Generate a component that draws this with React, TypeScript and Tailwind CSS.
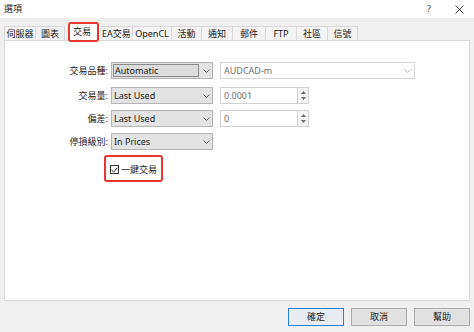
import React from 'react'

const font = { fontFamily: '"Noto Sans", "Noto Sans CJK TC", sans-serif' }

const tabs: { label: string; w: string; active?: boolean }[] = [
  { label: '伺服器', w: 'w-[32px]' },
  { label: '圖表', w: 'w-[29px]' },
  { label: '交易', w: 'w-[36px]', active: true },
  { label: 'EA交易', w: 'w-[32px]' },
  { label: 'OpenCL', w: 'w-[39px]' },
  { label: '活動', w: 'w-[30px]' },
  { label: '通知', w: 'w-[31px]' },
  { label: '郵件', w: 'w-[33px]' },
  { label: 'FTP', w: 'w-[31px]' },
  { label: '社區', w: 'w-[31px]' },
  { label: '信號', w: 'w-[30px]' },
]

function Chevron({ color = '#6b6b6b' }: { color?: string }) {
  return (
    <svg width="7" height="4" viewBox="0 0 7 4">
      <path d="M0.5 0.5 L3.5 3.5 L6.5 0.5" fill="none" stroke={color} strokeWidth="1" />
    </svg>
  )
}

function Select({ value, focused }: { value: string; focused?: boolean }) {
  return (
    <div className="ml-[2px] w-[102px] h-[17px] flex items-stretch bg-[#e3e3e3] border border-[#b4b4b4]">
      {focused ? (
        <div className="flex-1 flex items-center pl-[1px] m-[1px] border border-[#8c8c8c] bg-[#dcdcdc]">{value}</div>
      ) : (
        <div className="flex-1 flex items-center pl-[2px]">{value}</div>
      )}
      <div className="w-[12px] flex items-center justify-center">
        <Chevron />
      </div>
    </div>
  )
}

function Spin({ value }: { value: string }) {
  return (
    <div className="ml-[7px] flex h-[17px]">
      <div className="w-[78px] flex items-center pl-[3px] bg-white border border-[#d0d0d0] text-[#6f6f6f]">{value}</div>
      <div className="w-[11px] flex flex-col items-center justify-center gap-[3px] border border-l-0 border-[#d0d0d0] bg-[#f4f4f4]">
        <svg width="5" height="3" viewBox="0 0 5 3"><path d="M0 3 L2.5 0 L5 3 Z" fill="#6b6b6b" /></svg>
        <svg width="5" height="3" viewBox="0 0 5 3"><path d="M0 0 L2.5 3 L5 0 Z" fill="#6b6b6b" /></svg>
      </div>
    </div>
  )
}

function Row({ label, children, className = '' }: { label: string; children: React.ReactNode; className?: string }) {
  return (
    <div className={`flex items-center ${className}`}>
      <div className="w-[104px] text-right pr-[1px]">{label}</div>
      {children}
    </div>
  )
}

export default function App() {
  return (
    <div style={font} className="w-[474px] h-[332px] bg-[#f0f0f0] flex flex-col text-[9px] text-[#1a1a1a] overflow-hidden">
      {/* title bar */}
      <div className="h-[18px] bg-white flex items-center justify-between pl-[4px] pr-[10px]">
        <span>選項</span>
        <div className="flex items-center gap-[24px] text-[#444]">
          <span className="text-[9px]">?</span>
          <svg width="9" height="9" viewBox="0 0 9 9">
            <path d="M0.5 0.5 L8.5 8.5 M8.5 0.5 L0.5 8.5" stroke="#333" strokeWidth="0.9" />
          </svg>
        </div>
      </div>

      {/* tabs */}
      <div className="mt-[4px] -mb-[2px] h-[20px] pl-[4px] flex items-end relative z-10">
        {tabs.map((t, i) =>
          t.active ? (
            <div key={t.label} className={`${t.w} h-[20px] flex justify-start pl-[3px]`}>
              <div className="w-[31px] h-[20px] border-2 border-[#e8352d] rounded-[3px] bg-white flex items-center pl-[3px]">
                {t.label}
              </div>
            </div>
          ) : (
            <div
              key={t.label}
              className={`${t.w} h-[14px] mb-[2px] flex items-center justify-center bg-[#f3f3f3] border-t border-r border-[#d9d9d9] ${i === 0 ? 'border-l' : ''}`}
            >
              {t.label}
            </div>
          )
        )}
      </div>

      {/* panel */}
      <div className="mx-[4px] h-[261px] bg-white border border-[#d9d9d9] pt-[21px]">
        <Row label="交易品種:">
          <Select value="Automatic" focused />
          <div className="ml-[7px] w-[195px] h-[17px] flex items-center justify-between pl-[3px] pr-[3px] bg-white border border-[#d6d6d6] text-[#6f6f6f]">
            <span>AUDCAD-m</span>
            <Chevron color="#b0b0b0" />
          </div>
        </Row>
        <Row label="交易量:" className="mt-[8px]">
          <Select value="Last Used" />
          <Spin value="0.0001" />
        </Row>
        <Row label="偏差:" className="mt-[6px]">
          <Select value="Last Used" />
          <Spin value="0" />
        </Row>
        <Row label="停損級別:" className="mt-[6px]">
          <Select value="In Prices" />
        </Row>
        <div className="ml-[99px] mt-[5px] w-[59px] h-[27px] border-2 border-[#e8352d] rounded-[3px] flex items-center pt-[2px] pl-[4px]">
          <div className="w-[9px] h-[9px] border border-[#333] bg-white flex items-center justify-center">
            <svg width="7" height="6" viewBox="0 0 7 6">
              <path d="M0.5 3 L2.6 5 L6.5 0.6" fill="none" stroke="#222" strokeWidth="1" />
            </svg>
          </div>
          <span className="ml-[2px]">一鍵交易</span>
        </div>
      </div>

      {/* footer */}
      <div className="flex justify-end gap-[7px] pr-[4px] pt-[7px]">
        <button className="w-[56px] h-[18px] bg-[#e9edf1] border border-[#2b7fd3]">確定</button>
        <button className="w-[56px] h-[18px] bg-[#e1e1e1] border border-[#adadad]">取消</button>
        <button className="w-[56px] h-[18px] bg-[#e1e1e1] border border-[#adadad]">幫助</button>
      </div>
    </div>
  )
}
